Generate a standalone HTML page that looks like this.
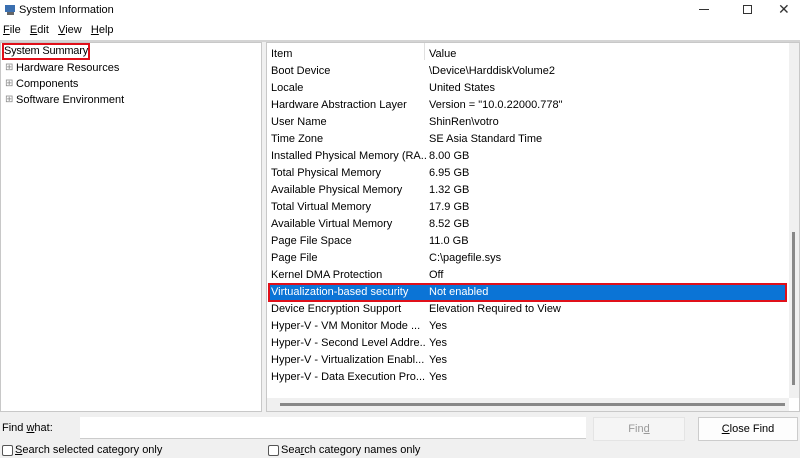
<!DOCTYPE html>
<html><head><style>
*{margin:0;padding:0;box-sizing:border-box}
body{width:800px;height:458px;background:#f0f0f0;font-family:"Liberation Sans",sans-serif;font-size:11px;color:#000;position:relative;overflow:hidden}
.a{position:absolute;white-space:nowrap}
</style></head><body>
<div class="a" style="left:0;top:0;width:800px;height:40px;background:#fff"></div>
<svg class="a" style="left:4px;top:4px" width="12" height="12"><rect x="1" y="1" width="10" height="7" fill="#3a6fb0"/><rect x="3" y="8" width="7" height="3" fill="#666"/></svg>
<div class="a" style="left:19px;top:4px;font-size:11px">System Information</div>
<div class="a" style="left:699px;top:9px;width:10px;height:1px;background:#333"></div>
<div class="a" style="left:743px;top:5px;width:9px;height:9px;border:1px solid #333"></div>
<div class="a" style="left:778px;top:1px;font-size:14px;color:#333">✕</div>
<div class="a" style="left:3px;top:24px;font-size:11px"><u>F</u>ile&nbsp;&nbsp; <u>E</u>dit&nbsp;&nbsp; <u>V</u>iew&nbsp;&nbsp; <u>H</u>elp</div>
<div class="a" style="left:0;top:40px;width:800px;height:2px;background:#d4d4d4"></div>
<div class="a" style="left:0;top:42px;width:262px;height:370px;background:#fff;border:1px solid #c8c8c8"></div>
<div class="a" style="left:2px;top:43px;width:88px;height:17px;border:2px solid #e0101a"></div>
<div class="a" style="left:4px;top:45px;letter-spacing:-0.2px">System Summary</div>
<div class="a" style="left:5px;top:62px;color:#888;font-size:10px">⊞</div>
<div class="a" style="left:16px;top:62px">Hardware Resources</div>
<div class="a" style="left:5px;top:78px;color:#888;font-size:10px">⊞</div>
<div class="a" style="left:16px;top:78px">Components</div>
<div class="a" style="left:5px;top:94px;color:#888;font-size:10px">⊞</div>
<div class="a" style="left:16px;top:94px">Software Environment</div>
<div class="a" style="left:266px;top:42px;width:534px;height:370px;background:#fff;border:1px solid #c8c8c8"></div>
<div class="a" style="left:789px;top:43px;width:10px;height:355px;background:#f0f0f0"></div>
<div class="a" style="left:792px;top:232px;width:3px;height:153px;background:#888"></div>
<div class="a" style="left:267px;top:398px;width:522px;height:13px;background:#f0f0f0"></div>
<div class="a" style="left:280px;top:403px;width:505px;height:3px;background:#888"></div>
<div class="a" style="left:424px;top:43px;width:1px;height:17px;background:#e0e0e0"></div>
<div class="a" style="left:268px;top:283px;width:519px;height:19px;background:#0b74d6;border:2px solid #e0101a"></div>
<div class="a" style="left:271px;top:46px;line-height:17px;width:155px;overflow:hidden">Item<br>Boot Device<br>Locale<br>Hardware Abstraction Layer<br>User Name<br>Time Zone<br>Installed Physical Memory (RA...<br>Total Physical Memory<br>Available Physical Memory<br>Total Virtual Memory<br>Available Virtual Memory<br>Page File Space<br>Page File<br>Kernel DMA Protection<br><span style="color:#fff">Virtualization-based security</span><br>Device Encryption Support<br>Hyper-V - VM Monitor Mode ...<br>Hyper-V - Second Level Addre...<br>Hyper-V - Virtualization Enabl...<br>Hyper-V - Data Execution Pro...</div>
<div class="a" style="left:429px;top:46px;line-height:17px">Value<br>\Device\HarddiskVolume2<br>United States<br>Version = "10.0.22000.778"<br>ShinRen\votro<br>SE Asia Standard Time<br>8.00 GB<br>6.95 GB<br>1.32 GB<br>17.9 GB<br>8.52 GB<br>11.0 GB<br>C:\pagefile.sys<br>Off<br><span style="color:#fff">Not enabled</span><br>Elevation Required to View<br>Yes<br>Yes<br>Yes<br>Yes</div>
<div class="a" style="left:2px;top:422px">Find <u>w</u>hat:</div>
<div class="a" style="left:80px;top:417px;width:506px;height:22px;background:#fff;border-bottom:1px solid #ccc"></div>
<div class="a" style="left:593px;top:417px;width:92px;height:24px;background:#f5f5f5;border:1px solid #e4e4e4;color:#999;text-align:center;line-height:22px">Fin<u>d</u></div>
<div class="a" style="left:698px;top:417px;width:100px;height:24px;background:#fdfdfd;border:1px solid #ccc;text-align:center;line-height:22px"><u>C</u>lose Find</div>
<div class="a" style="left:2px;top:445px;width:11px;height:11px;border:1px solid #555;border-radius:2px;background:#fff"></div>
<div class="a" style="left:15px;top:444px"><u>S</u>earch selected category only</div>
<div class="a" style="left:268px;top:445px;width:11px;height:11px;border:1px solid #555;border-radius:2px;background:#fff"></div>
<div class="a" style="left:281px;top:444px">Sea<u>r</u>ch category names only</div>
</body></html>
